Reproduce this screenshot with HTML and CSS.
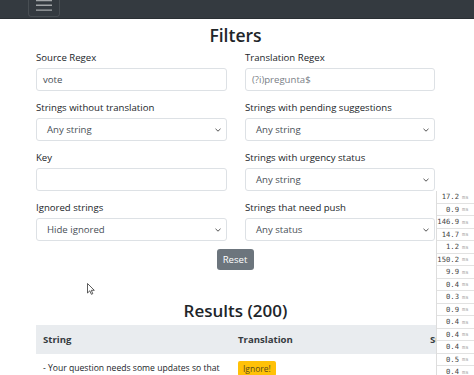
FILE: index.html
```html
<!DOCTYPE html>
<html lang="en">
<head>
<meta charset="utf-8">
<title>Filters</title>
<link rel="stylesheet" href="styles.css">
</head>
<body>
<nav class="navbar">
  <div class="toggler">
    <svg width="16" height="14" viewBox="0 0 16 14"><path d="M0 1.5H16M0 6.3H16M0 11.1H16" stroke="rgba(255,255,255,0.55)" stroke-width="1.4"/></svg>
  </div>
</nav>
<main class="container">
  <h2 class="title">Filters</h2>
  <div class="filters">
    <div class="group">
      <label class="label">Source Regex</label>
      <div class="control">vote</div>
    </div>
    <div class="group">
      <label class="label">Translation Regex</label>
      <div class="control placeholder">(?i)pregunta$</div>
    </div>
    <div class="group">
      <label class="label">Strings without translation</label>
      <div class="control select"><span>Any string</span><svg class="chev" width="6" height="4" viewBox="0 0 6 4"><path d="M0.5 0.8L3 3.2L5.5 0.8" fill="none" stroke="#555" stroke-width="1"/></svg></div>
    </div>
    <div class="group">
      <label class="label">Strings with pending suggestions</label>
      <div class="control select"><span>Any string</span><svg class="chev" width="6" height="4" viewBox="0 0 6 4"><path d="M0.5 0.8L3 3.2L5.5 0.8" fill="none" stroke="#555" stroke-width="1"/></svg></div>
    </div>
    <div class="group">
      <label class="label">Key</label>
      <div class="control"></div>
    </div>
    <div class="group">
      <label class="label">Strings with urgency status</label>
      <div class="control select"><span>Any string</span><svg class="chev" width="6" height="4" viewBox="0 0 6 4"><path d="M0.5 0.8L3 3.2L5.5 0.8" fill="none" stroke="#555" stroke-width="1"/></svg></div>
    </div>
    <div class="group">
      <label class="label">Ignored strings</label>
      <div class="control select"><span>Hide ignored</span><svg class="chev" width="6" height="4" viewBox="0 0 6 4"><path d="M0.5 0.8L3 3.2L5.5 0.8" fill="none" stroke="#555" stroke-width="1"/></svg></div>
    </div>
    <div class="group">
      <label class="label">Strings that need push</label>
      <div class="control select"><span>Any status</span><svg class="chev" width="6" height="4" viewBox="0 0 6 4"><path d="M0.5 0.8L3 3.2L5.5 0.8" fill="none" stroke="#555" stroke-width="1"/></svg></div>
    </div>
  </div>
  <div class="actions"><button class="btn">Reset</button></div>
  <h3 class="results">Results (200)</h3>
  <div class="table-wrap">
    <table class="table">
      <thead>
        <tr><th class="c1">String</th><th class="c2">Translation</th><th>Suggestions</th></tr>
      </thead>
      <tbody>
        <tr><td>- Your question needs some updates so that it can be answered</td><td><span class="badge">Ignore!</span></td><td></td></tr>
      </tbody>
    </table>
  </div>
</main>
<div class="timings">
  <div class="t"><b>17.2</b><i>ms</i></div>
  <div class="t"><b>0.9</b><i>ms</i></div>
  <div class="t"><b>146.9</b><i>ms</i></div>
  <div class="t"><b>14.7</b><i>ms</i></div>
  <div class="t"><b>1.2</b><i>ms</i></div>
  <div class="t"><b>150.2</b><i>ms</i></div>
  <div class="t"><b>9.9</b><i>ms</i></div>
  <div class="t"><b>0.4</b><i>ms</i></div>
  <div class="t"><b>0.3</b><i>ms</i></div>
  <div class="t"><b>0.9</b><i>ms</i></div>
  <div class="t"><b>0.4</b><i>ms</i></div>
  <div class="t"><b>0.4</b><i>ms</i></div>
  <div class="t"><b>0.4</b><i>ms</i></div>
  <div class="t"><b>0.5</b><i>ms</i></div>
  <div class="t"><b>0.4</b><i>ms</i></div>
</div>
<svg class="cursor" width="8" height="12" viewBox="0 0 8 12"><path d="M0.5 0.5V10L2.8 7.8L4.4 11.3L5.8 10.7L4.3 7.3H7.3Z" fill="#fff" stroke="#333" stroke-width="0.8" stroke-linejoin="round"/></svg>
</body>
</html>
```
FILE: styles.css
```css
html, body {
  margin: 0;
  padding: 0;
}
body {
  width: 474px;
  height: 375px;
  overflow: hidden;
  position: relative;
  background: #fff;
  font-family: "Open Sans", "Noto Sans", sans-serif;
  color: #212529;
  font-size: 9.6px;
}
.navbar {
  height: 19px;
  background: #343a40;
  display: flex;
  align-items: flex-end;
  padding-left: 28px;
  overflow: hidden;
  border-bottom: 1px solid #2a2f34;
  box-sizing: border-box;
}
.toggler {
  width: 32px;
  height: 24px;
  box-sizing: border-box;
  border: 1px solid rgba(255,255,255,0.1);
  border-radius: 3px;
  margin-bottom: 1px;
  display: flex;
  justify-content: center;
  align-items: flex-end;
  padding-bottom: 3px;
  flex-shrink: 0;
}
.toggler svg {
  display: block;
}
.container {
  padding: 0 39px 0 36px;
}
.title {
  margin: 4px 0 0;
  height: 28px;
  line-height: 24px;
  font-size: 17.5px;
  font-weight: 600;
  text-align: center;
}
.filters {
  display: grid;
  grid-template-columns: 191px 190px;
  column-gap: 18px;
}
.group {
  margin-bottom: 10px;
}
.group:nth-last-child(-n+2) {
  margin-bottom: 0;
}
.label {
  display: block;
  line-height: 14px;
  margin-bottom: 3px;
  font-size: 9.6px;
}
.control {
  height: 23px;
  box-sizing: border-box;
  border: 1px solid #dde1e5;
  border-radius: 3px;
  padding: 0 6px;
  display: flex;
  align-items: center;
  color: #495057;
  font-size: 9.6px;
}
.placeholder {
  color: #7a8087;
}
.select {
  padding: 0 5px 0 10px;
  justify-content: space-between;
}
.chev {
  display: block;
}
.actions {
  display: flex;
  justify-content: center;
  margin-top: 8px;
}
.btn {
  width: 37px;
  height: 21px;
  border: 0;
  border-radius: 3px;
  background: #6c757d;
  color: #fff;
  font-family: inherit;
  font-size: 9.6px;
  padding: 0;
  margin-left: -1px;
}
.results {
  margin: 28px 0 0;
  line-height: 26px;
  height: 26px;
  font-size: 17px;
  font-weight: 600;
  text-align: center;
}
.table-wrap {
  margin-top: 1px;
  margin-right: -1px;
  overflow: hidden;
}
.table {
  border-collapse: collapse;
  width: 600px;
  table-layout: fixed;
}
.table th {
  background: #e9ecef;
  height: 29px;
  padding: 0 7px;
  text-align: left;
  font-weight: 700;
  font-size: 9.6px;
  color: #343a40;
  white-space: nowrap;
  overflow: hidden;
}
.c1 { width: 181px; }
.c2 { width: 178px; }
.table td {
  padding: 7px 7px 0;
  vertical-align: top;
  line-height: 14px;
  font-size: 8.6px;
}
.badge {
  display: inline-block;
  background: #ffc107;
  color: #5a4a1a;
  font-size: 8.5px;
  border-radius: 2px;
  padding: 1px 5px;
  line-height: 13px;
}
.timings {
  position: absolute;
  left: 436px;
  top: 191px;
  width: 38px;
  box-sizing: border-box;
  background: #fff;
  border-left: 1px solid #ddd;
  font-family: "DejaVu Sans Mono", monospace;
}
.t {
  height: 11.5px;
  border-bottom: 1px solid #e2e2e2;
  display: flex;
  justify-content: flex-end;
  align-items: center;
  padding-right: 4px;
  font-size: 7.2px;
}
.t b {
  font-weight: 400;
  color: #444;
}
.t i {
  font-style: normal;
  color: #a8a8a8;
  font-size: 5.5px;
  margin-left: 3px;
  width: 8px;
}
.cursor {
  position: absolute;
  left: 87px;
  top: 283px;
}
```
